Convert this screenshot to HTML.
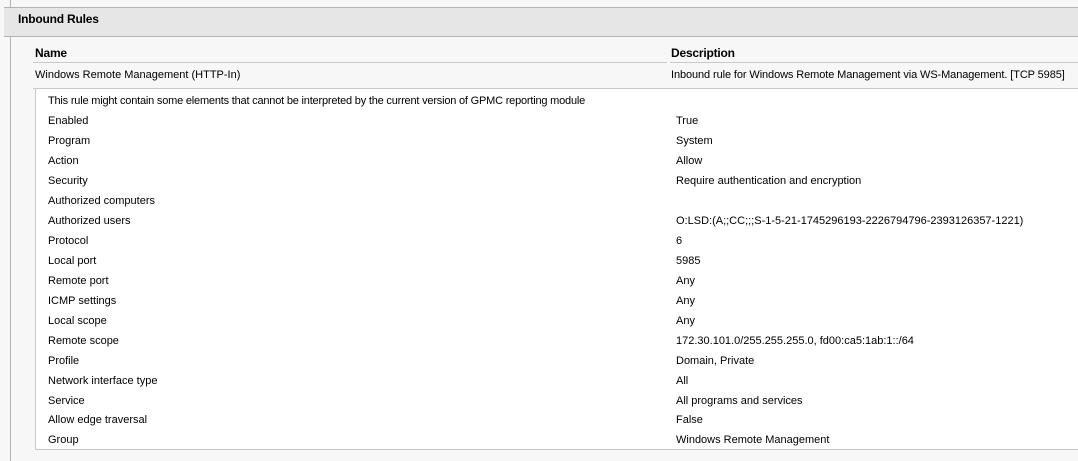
<!DOCTYPE html>
<html><head><style>
html,body{margin:0;padding:0;width:1078px;height:461px;overflow:hidden;background:#f7f7f7;font-family:"Liberation Sans",sans-serif;font-size:11px;color:#000;}
.abs{position:absolute;}
.t{position:absolute;white-space:nowrap;line-height:14px;}
#b .t{margin-top:1px}
</style></head><body>
<div class="abs" style="left:10px;top:0;width:1px;height:7px;background:#b4b4b4"></div>
<div class="abs" style="left:4px;top:7px;width:1074px;height:28px;background:#e6e6e6;border-top:1px solid #b4b4b4;border-bottom:1px solid #b4b4b4"></div>
<div class="t" style="left:18px;top:12px;font-weight:bold;font-size:12px;letter-spacing:-0.2px">Inbound Rules</div>
<div class="abs" style="left:10px;top:37px;width:1px;height:424px;background:#b4b4b4"></div>
<div class="t" style="left:35px;top:46px;font-weight:bold;font-size:12px;letter-spacing:-0.2px">Name</div>
<div class="t" style="left:671px;top:46px;font-weight:bold;font-size:12px;letter-spacing:-0.2px">Description</div>
<div class="abs" style="left:33px;top:62px;width:634px;height:1px;background:#c8c8c8"></div>
<div class="abs" style="left:670px;top:62px;width:408px;height:1px;background:#c8c8c8"></div>
<div class="t" style="left:35px;top:68px">Windows Remote Management (HTTP-In)</div>
<div class="t" style="left:671px;top:68px;letter-spacing:-0.1px">Inbound rule for Windows Remote Management via WS-Management. [TCP 5985]</div>
<div class="abs" style="left:33px;top:88px;width:1045px;height:1px;background:#c8c8c8"></div>
<div class="abs" style="left:35px;top:89px;width:1045px;height:360px;background:#fff;border:1px solid #c8c8c8;border-top:none"></div>
<div id="b">
<div class="t" style="left:48px;top:93px;letter-spacing:-0.2px">This rule might contain some elements that cannot be interpreted by the current version of GPMC reporting module</div>
<div class="t" style="left:48px;top:113px">Enabled</div><div class="t" style="left:676px;top:113px">True</div>
<div class="t" style="left:48px;top:133px">Program</div><div class="t" style="left:676px;top:133px">System</div>
<div class="t" style="left:48px;top:153px">Action</div><div class="t" style="left:676px;top:153px">Allow</div>
<div class="t" style="left:48px;top:173px">Security</div><div class="t" style="left:676px;top:173px">Require authentication and encryption</div>
<div class="t" style="left:48px;top:193px">Authorized computers</div>
<div class="t" style="left:48px;top:213px">Authorized users</div><div class="t" style="left:676px;top:213px">O:LSD:(A;;CC;;;S-1-5-21-1745296193-2226794796-2393126357-1221)</div>
<div class="t" style="left:48px;top:233px">Protocol</div><div class="t" style="left:676px;top:233px">6</div>
<div class="t" style="left:48px;top:253px">Local port</div><div class="t" style="left:676px;top:253px">5985</div>
<div class="t" style="left:48px;top:273px">Remote port</div><div class="t" style="left:676px;top:273px">Any</div>
<div class="t" style="left:48px;top:293px">ICMP settings</div><div class="t" style="left:676px;top:293px">Any</div>
<div class="t" style="left:48px;top:313px">Local scope</div><div class="t" style="left:676px;top:313px">Any</div>
<div class="t" style="left:48px;top:333px">Remote scope</div><div class="t" style="left:676px;top:333px">172.30.101.0/255.255.255.0, fd00:ca5:1ab:1::/64</div>
<div class="t" style="left:48px;top:353px">Profile</div><div class="t" style="left:676px;top:353px">Domain, Private</div>
<div class="t" style="left:48px;top:373px">Network interface type</div><div class="t" style="left:676px;top:373px">All</div>
<div class="t" style="left:48px;top:393px">Service</div><div class="t" style="left:676px;top:393px">All programs and services</div>
<div class="t" style="left:48px;top:412px">Allow edge traversal</div><div class="t" style="left:676px;top:412px">False</div>
<div class="t" style="left:48px;top:432px">Group</div><div class="t" style="left:676px;top:432px">Windows Remote Management</div>
</div>
</body></html>
